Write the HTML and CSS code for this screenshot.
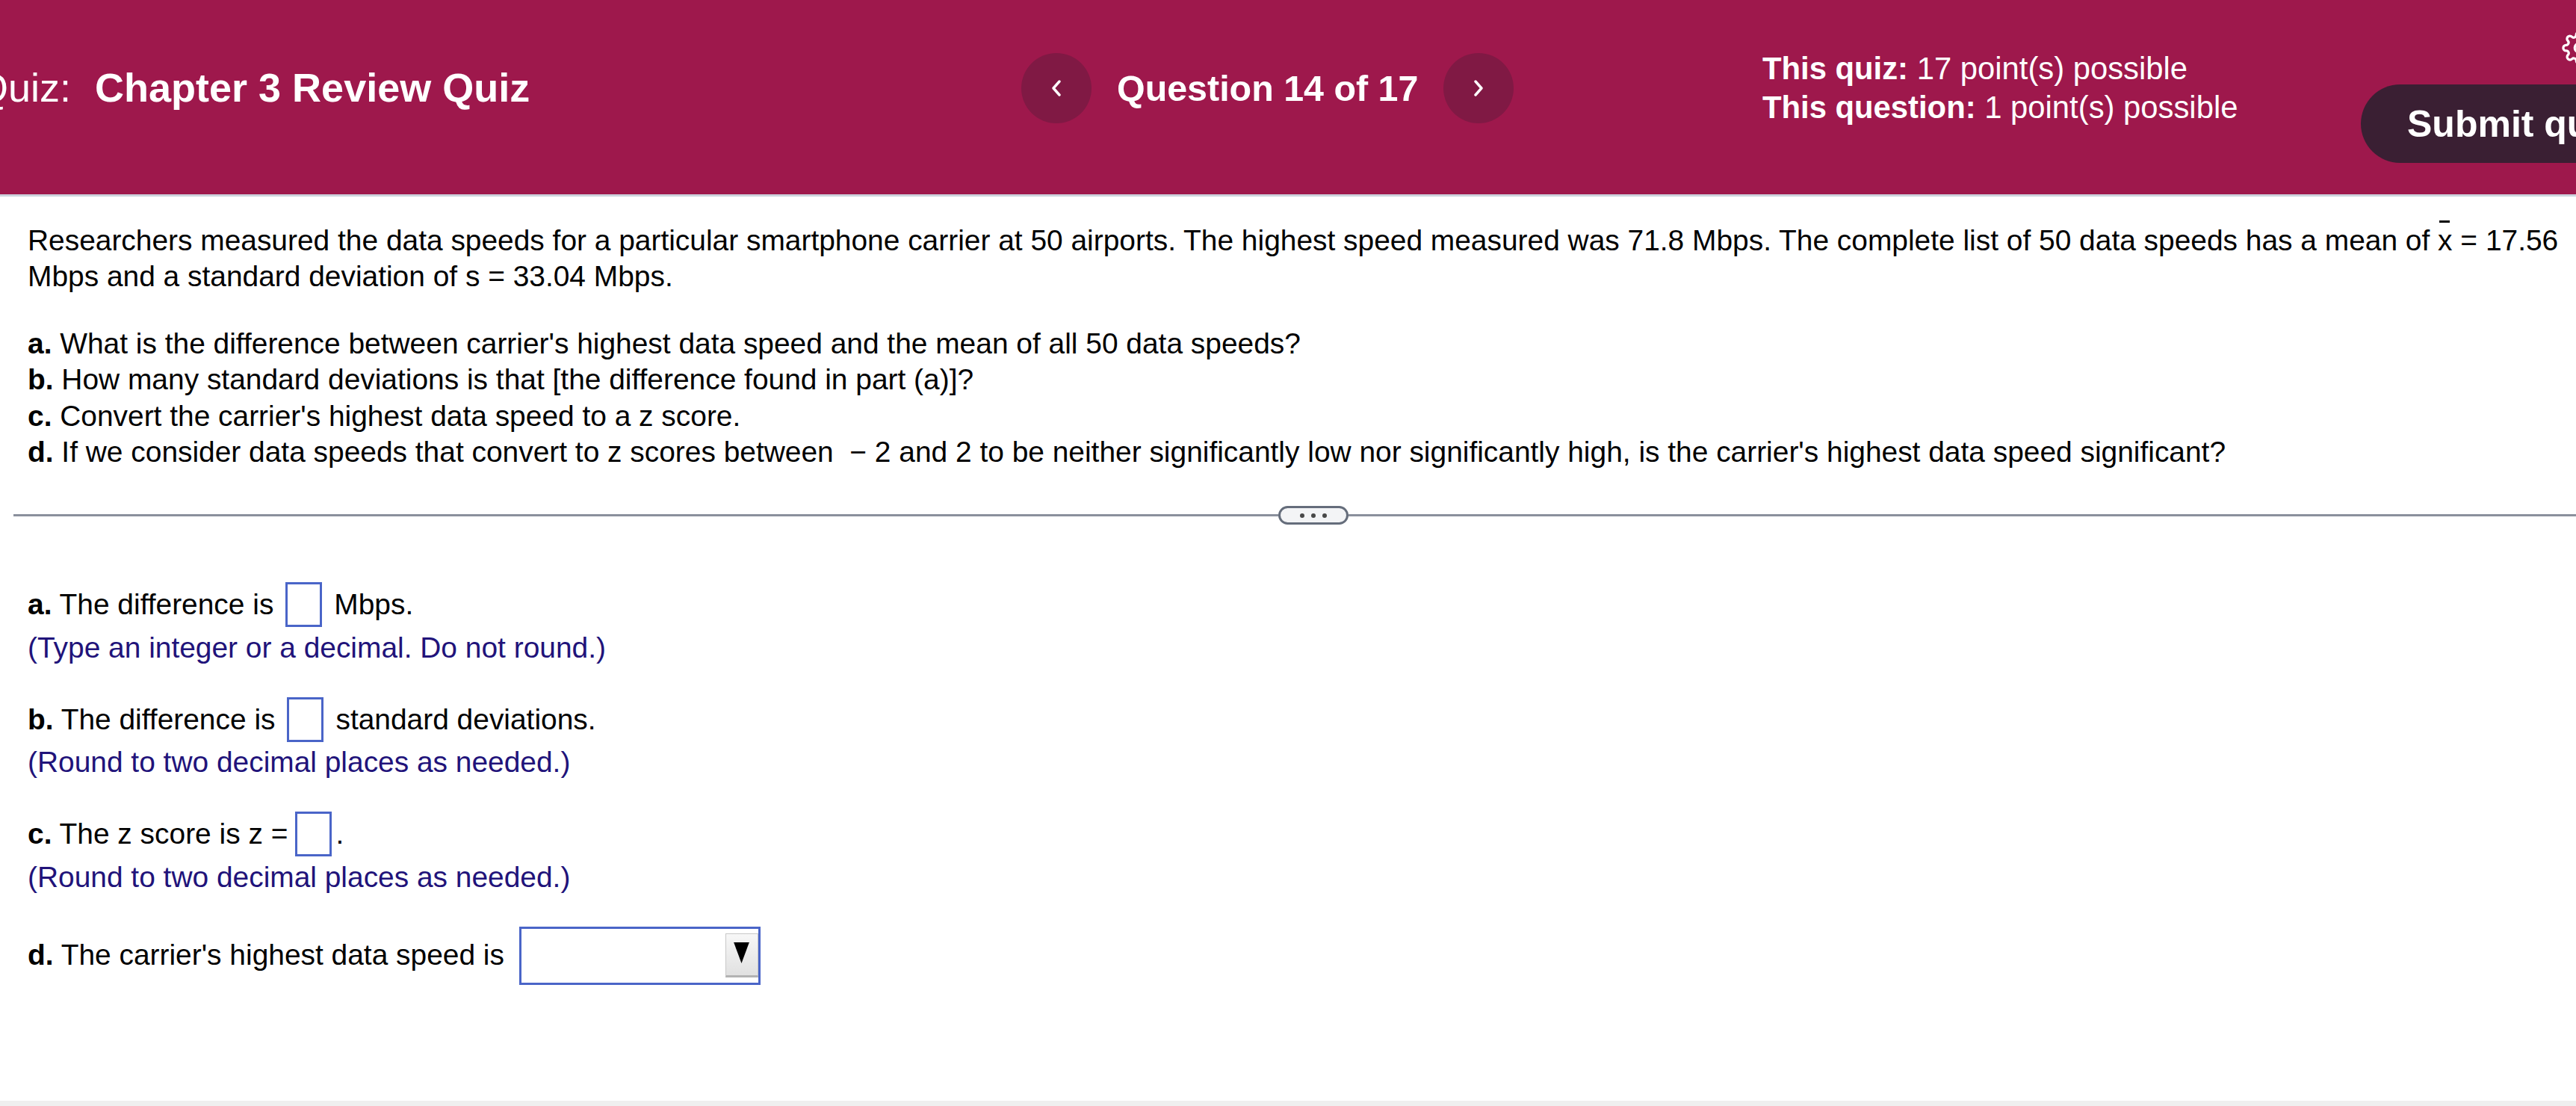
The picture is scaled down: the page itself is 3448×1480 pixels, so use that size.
FILE: index.html
```html
<!DOCTYPE html>
<html lang="en">
<head>
<meta charset="utf-8">
<title>Chapter 3 Review Quiz</title>
<link rel="stylesheet" href="styles.css">
</head>
<body>
<div class="page">
  <header class="topbar">
    <div class="topgrid">
      <h1 class="title"><span class="title-label">Quiz:</span><span class="title-name">Chapter 3 Review Quiz</span></h1>
      <nav class="qnav">
        <button class="navbtn" aria-label="Previous question">
          <svg class="chev" viewBox="0 0 14 22" width="14" height="22"><polyline points="11,2 3,11 11,20"/></svg>
        </button>
        <span class="qnum">Question 14 of 17</span>
        <button class="navbtn" aria-label="Next question">
          <svg class="chev" viewBox="0 0 14 22" width="14" height="22"><polyline points="3,2 11,11 3,20"/></svg>
        </button>
      </nav>
      <div class="points">
        <div><b>This quiz:</b> 17 point(s) possible</div>
        <div><b>This question:</b> 1 point(s) possible</div>
      </div>
      <div class="actions">
        <svg class="gear" viewBox="0 0 24 24" width="46" height="46"><circle cx="12" cy="12" r="3"/><path d="M19.4 15a1.65 1.65 0 0 0 .33 1.82l.06.06a2 2 0 0 1 0 2.83 2 2 0 0 1-2.83 0l-.06-.06a1.65 1.65 0 0 0-1.82-.33 1.65 1.65 0 0 0-1 1.51V21a2 2 0 0 1-2 2 2 2 0 0 1-2-2v-.09A1.65 1.65 0 0 0 9 19.4a1.65 1.65 0 0 0-1.82.33l-.06.06a2 2 0 0 1-2.83 0 2 2 0 0 1 0-2.83l.06-.06a1.65 1.65 0 0 0 .33-1.82 1.65 1.65 0 0 0-1.51-1H3a2 2 0 0 1-2-2 2 2 0 0 1 2-2h.09A1.65 1.65 0 0 0 4.6 9a1.65 1.65 0 0 0-.33-1.82l-.06-.06a2 2 0 0 1 0-2.83 2 2 0 0 1 2.83 0l.06.06a1.65 1.65 0 0 0 1.82.33H9a1.65 1.65 0 0 0 1-1.51V3a2 2 0 0 1 2-2 2 2 0 0 1 2 2v.09a1.65 1.65 0 0 0 1 1.51 1.65 1.65 0 0 0 1.82-.33l.06-.06a2 2 0 0 1 2.83 0 2 2 0 0 1 0 2.83l-.06.06a1.65 1.65 0 0 0-.33 1.82V9a1.65 1.65 0 0 0 1.51 1H21a2 2 0 0 1 2 2 2 2 0 0 1-2 2h-.09a1.65 1.65 0 0 0-1.51 1z"/></svg>
        <button class="submit">Submit quiz</button>
      </div>
    </div>
  </header>

  <main class="content">
    <p class="stem">Researchers measured the data speeds for a particular smartphone carrier at 50 airports. The highest speed measured was 71.8 Mbps. The complete list of 50 data speeds has a mean of <span class="xbar">x</span> = 17.56<br>Mbps and a standard deviation of s = 33.04 Mbps.</p>

    <div class="parts">
      <div><b>a.</b> What is the difference between carrier's highest data speed and the mean of all 50 data speeds?</div>
      <div><b>b.</b> How many standard deviations is that [the difference found in part (a)]?</div>
      <div><b>c.</b> Convert the carrier's highest data speed to a z score.</div>
      <div><b>d.</b> If we consider data speeds that convert to z scores between&nbsp; − 2 and 2 to be neither significantly low nor significantly high, is the carrier's highest data speed significant?</div>
    </div>

    <div class="divider">
      <span class="rule"></span>
      <span class="pill"><i></i><i></i><i></i></span>
      <span class="rule"></span>
    </div>

    <div class="answers">
      <div class="answer">
        <div class="row"><span><b>a.</b> The difference is</span><span class="box"></span><span>Mbps.</span></div>
        <div class="hint">(Type an integer or a decimal. Do not round.)</div>
      </div>
      <div class="answer">
        <div class="row"><span><b>b.</b> The difference is</span><span class="box"></span><span>standard deviations.</span></div>
        <div class="hint">(Round to two decimal places as needed.)</div>
      </div>
      <div class="answer">
        <div class="row"><span><b>c.</b> The z score is z =</span><span class="box box-tight"></span><span>.</span></div>
        <div class="hint">(Round to two decimal places as needed.)</div>
      </div>
      <div class="answer">
        <div class="row"><span><b>d.</b> The carrier's highest data speed is</span>
          <span class="select"><span class="select-btn"><svg viewBox="0 0 20 27" width="21" height="28"><polygon points="0,0 20,0 10,27"/></svg></span></span>
        </div>
      </div>
    </div>
  </main>
  <div class="footer-strip"></div>
</div>
</body>
</html>
```

FILE: styles.css
```css
html, body {
  margin: 0;
  padding: 0;
}
body {
  font-family: "Liberation Sans", Arial, Helvetica, sans-serif;
  color: #000;
  background: #fff;
  overflow: hidden;
}
.page {
  min-height: 100vh;
  display: flex;
  flex-direction: column;
}

/* ---------- header ---------- */
.topbar {
  background: #9e184c;
  height: 260px;
  border-bottom: 3px solid #ccd2dc;
  overflow: hidden;
  color: #fff;
}
.topgrid {
  display: grid;
  grid-template-columns: 1398px 992px 801px 520px;
  align-items: center;
  height: 235px;
  margin-left: -31px;
}
.title {
  margin: 0;
  font-size: 54px;
  line-height: 1.15;
  font-weight: normal;
  white-space: nowrap;
}
.title-name {
  font-weight: bold;
  margin-left: 32px;
}
.qnav {
  display: flex;
  align-items: center;
  gap: 34px;
}
.navbtn {
  width: 94px;
  height: 94px;
  border-radius: 50%;
  background: #801944;
  border: 0;
  padding: 0;
  display: flex;
  align-items: center;
  justify-content: center;
}
.chev {
  fill: none;
  stroke: #fff;
  stroke-width: 3.4;
  stroke-linecap: round;
  stroke-linejoin: round;
}
.qnum {
  font-size: 48.4px;
  font-weight: bold;
  white-space: nowrap;
}
.points {
  font-size: 41.8px;
  line-height: 52px;
  white-space: nowrap;
}
.actions {
  align-self: start;
  padding-top: 41px;
  display: flex;
  flex-direction: column;
  align-items: flex-start;
}
.gear {
  margin-left: 269px;
  fill: none;
  stroke: #fff;
  stroke-width: 1.7;
  stroke-linecap: round;
  stroke-linejoin: round;
}
.submit {
  margin-top: 26px;
  height: 105px;
  padding: 0 62px;
  border-radius: 53px;
  background: #3a1f33;
  color: #fff;
  border: 0;
  font-family: "Liberation Sans", Arial, sans-serif;
  font-weight: bold;
  font-size: 50px;
  white-space: nowrap;
}

/* ---------- content ---------- */
.content {
  flex: 1;
  padding: 35px 0 0 37px;
  font-size: 38.9px;
  line-height: 48.4px;
}
.stem {
  margin: 0;
  white-space: nowrap;
}
.xbar {
  position: relative;
}
.xbar::before {
  content: "";
  position: absolute;
  left: 2px;
  top: -5px;
  width: 14px;
  height: 3px;
  background: #000;
}
.parts {
  margin-top: 41px;
  white-space: nowrap;
}
.divider {
  display: flex;
  align-items: center;
  width: 3480px;
  margin: 48px 0 0 -19px;
}
.rule {
  flex: 1;
  height: 3px;
  background: #8a909c;
}
.pill {
  width: 94px;
  height: 25px;
  box-sizing: border-box;
  border: 3px solid #656d7b;
  border-radius: 13px;
  background: #f3f4f6;
  display: flex;
  align-items: center;
  justify-content: center;
  gap: 9px;
}
.pill i {
  width: 6px;
  height: 6px;
  border-radius: 50%;
  background: #484848;
}
.answers {
  margin-top: 77px;
}
.answer + .answer {
  margin-top: 41.5px;
}
.row {
  display: flex;
  align-items: center;
  min-height: 60px;
  white-space: nowrap;
}
.box {
  width: 49px;
  height: 60px;
  box-sizing: border-box;
  border: 3px solid #4a65c8;
  margin: 0 16px;
  background: #fff;
}
.box-tight {
  margin: 0 5px 0 10px;
}
.hint {
  margin-top: 3.5px;
  color: #21137a;
}
.select {
  width: 323px;
  height: 78px;
  box-sizing: border-box;
  border: 3px solid #4a65c8;
  margin-left: 20px;
  display: flex;
  justify-content: flex-end;
  align-items: center;
  background: #fff;
}
.select-btn {
  width: 44px;
  height: 59px;
  box-sizing: border-box;
  background: linear-gradient(#f7f7f7, #e1e1e1);
  border: 1px solid #c8c8c8;
  border-bottom: 3px solid #b3b3b3;
  display: flex;
  align-items: flex-start;
  justify-content: center;
  padding-top: 11px;
}
.select-btn svg {
  fill: #000;
}
.footer-strip {
  height: 7px;
  background: #efefef;
}
```
